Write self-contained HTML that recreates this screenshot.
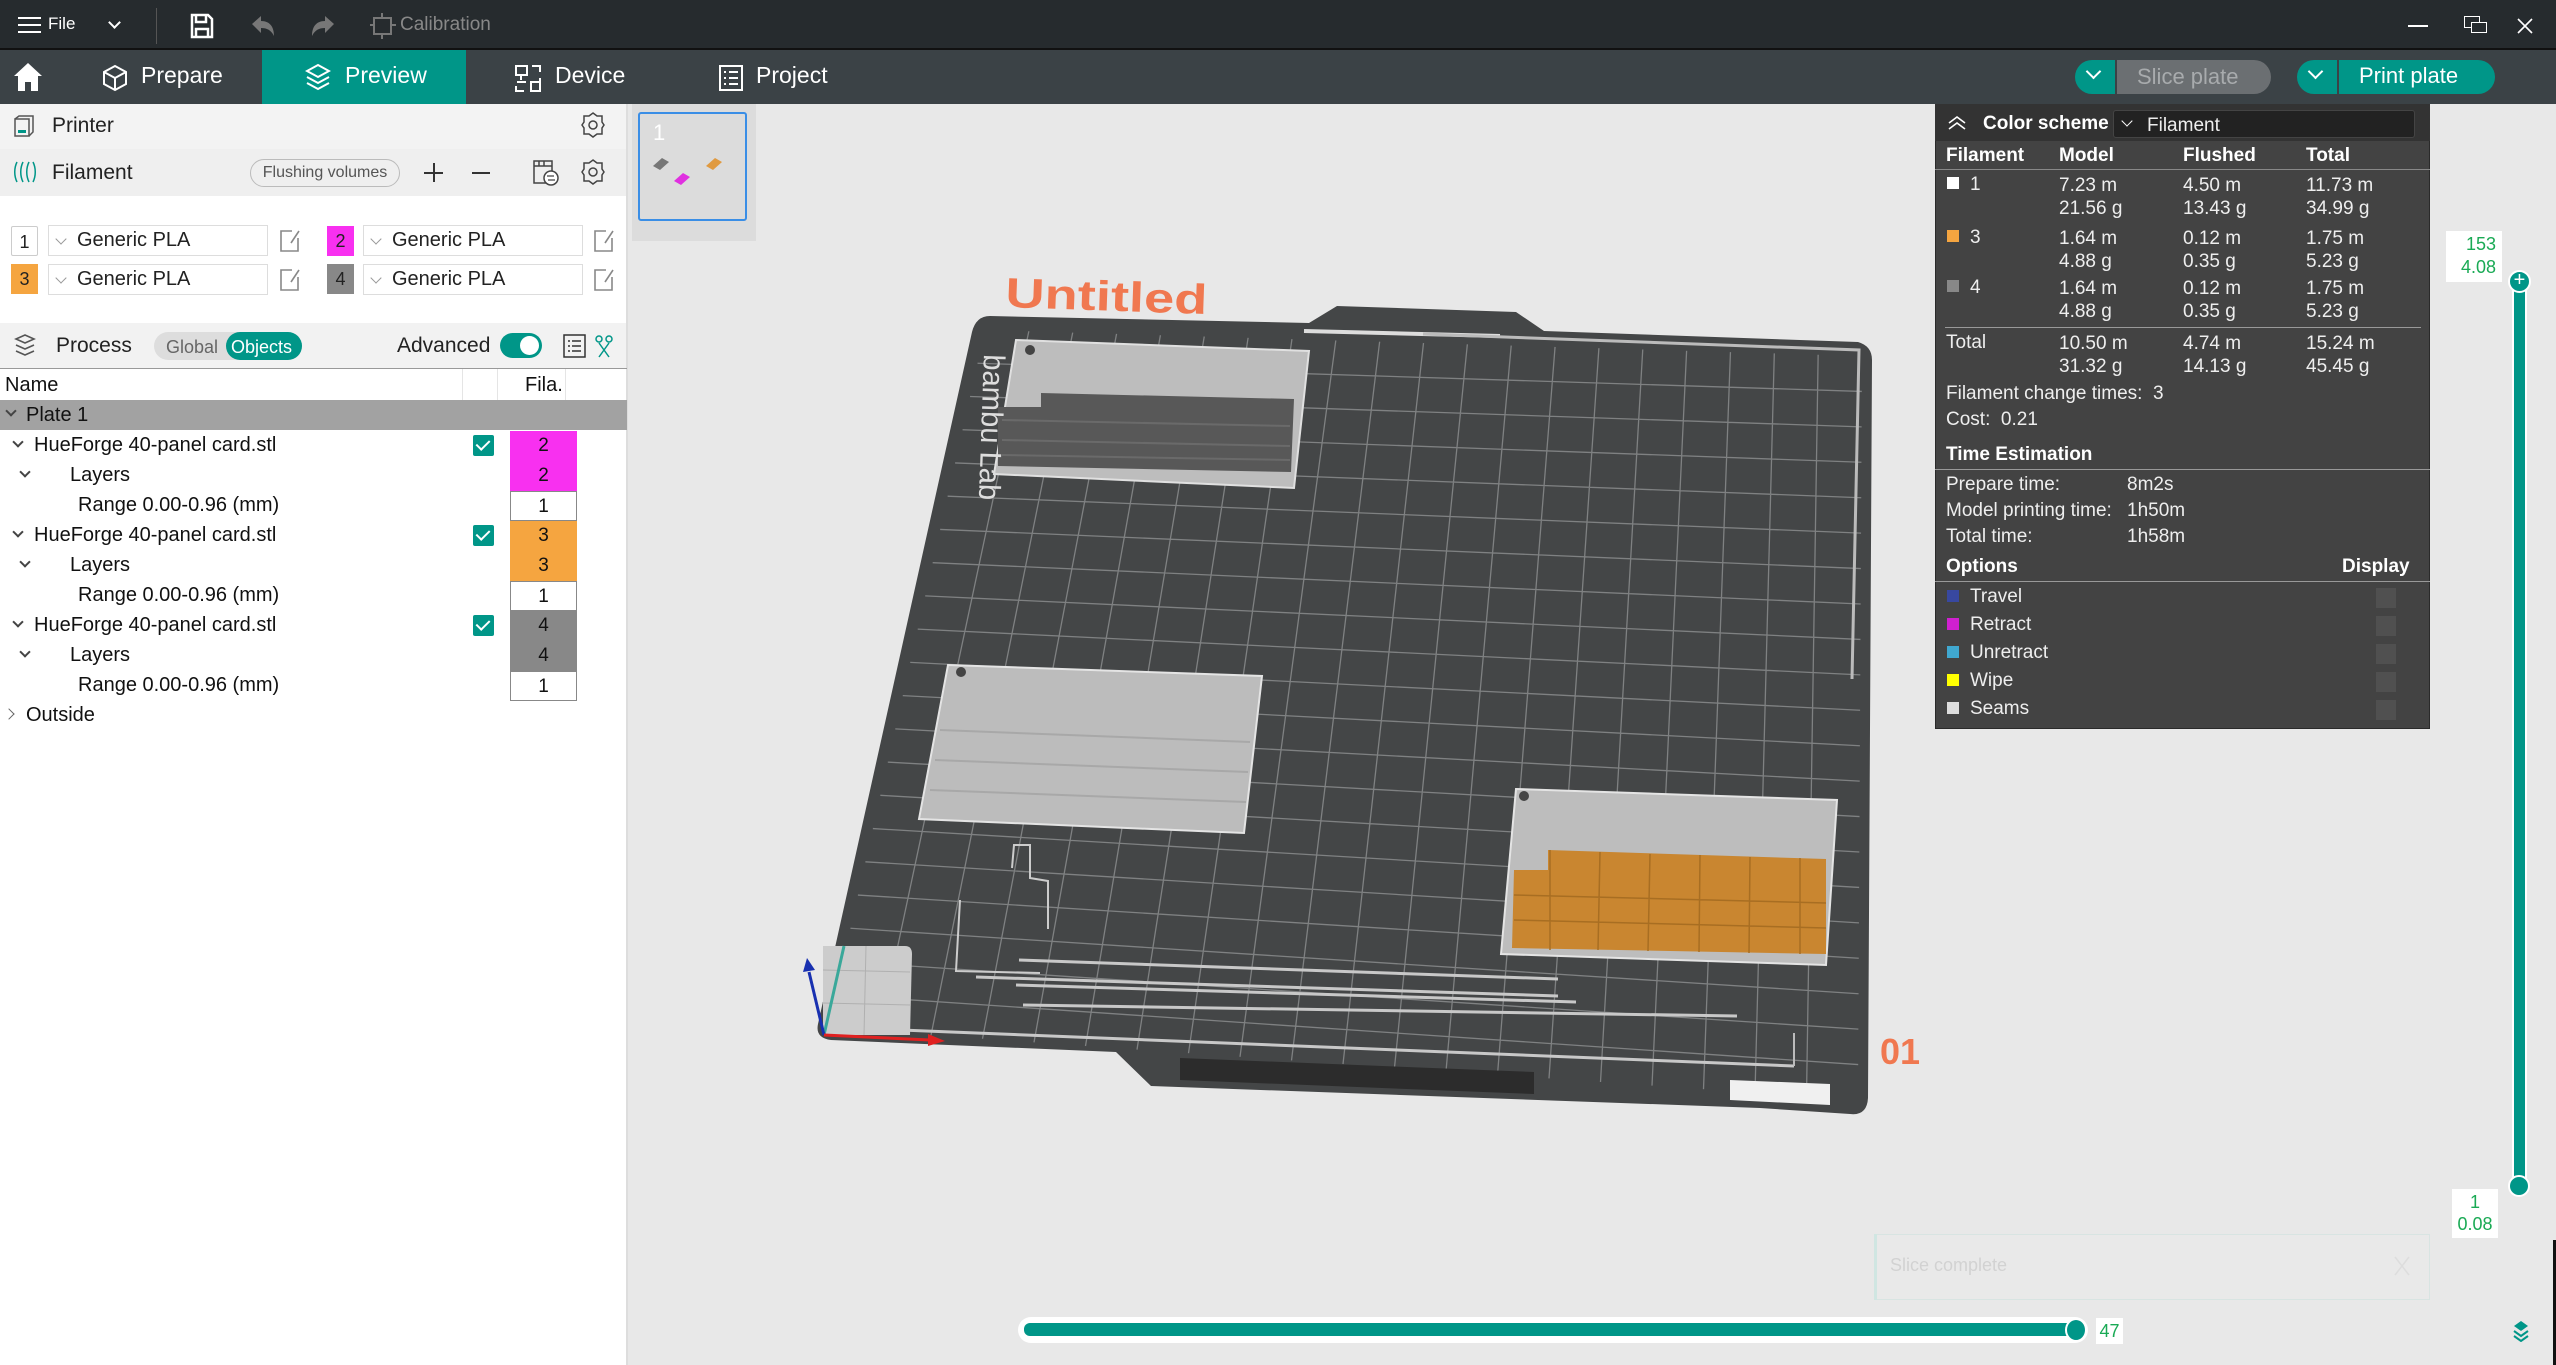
<!DOCTYPE html>
<html><head><meta charset="utf-8">
<style>
*{margin:0;padding:0;box-sizing:border-box}
body{width:2556px;height:1365px;overflow:hidden;background:#e8e8e8;font-family:"Liberation Sans","DejaVu Sans",sans-serif;position:relative}
.a{position:absolute}
.t{position:absolute;white-space:nowrap}
#title{left:0;top:0;width:2556px;height:50px;background:#262b2e;border-bottom:2px solid #111}
#nav{left:0;top:50px;width:2556px;height:54px;background:#3b4246}
.nt{color:#fff;font-size:23px;top:62px}
#left{left:0;top:104px;width:628px;height:1261px;background:#fff;border-right:2px solid #ddd}
.sec{color:#222;font-size:21px}
.st{color:#eee;font-size:19px}
.sb{color:#fff;font-size:19px;font-weight:bold}
.tr{font-size:20px;color:#111}
.fb{position:absolute;left:510px;width:67px;height:30px;text-align:center;font-size:19px;line-height:30px;color:#111}
.cb{position:absolute;left:473px;width:21px;height:21px;background:#009688;border-radius:2px}
.cb:after{content:"";position:absolute;left:6px;top:2px;width:6px;height:11px;border:solid #fff;border-width:0 2px 2px 0;transform:rotate(45deg)}
.combo{position:absolute;height:31px;border:1px solid #ddd;font-size:20px;color:#222;line-height:29px;padding-left:28px}
.combo:before{content:"";position:absolute;left:8px;top:9px;width:7px;height:7px;border:solid #999;border-width:0 1px 1px 0;transform:rotate(45deg)}
.num{position:absolute;width:27px;height:30px;font-size:18px;text-align:center;line-height:30px;color:#222}
.chev{position:absolute;width:10px;height:10px;border:solid #444;border-width:0 2px 2px 0;transform:rotate(45deg)}
</style></head><body>
<div id="title" class="a"></div>
<div class="a" style="left:18px;top:17px;width:23px;height:2px;background:#fff;box-shadow:0 7px 0 #fff,0 14px 0 #fff"></div>
<div class="t" style="left:48px;top:14px;color:#fff;font-size:17px">File</div>
<div class="a" style="left:110px;top:18px;width:9px;height:9px;border:solid #fff;border-width:0 2px 2px 0;transform:rotate(45deg)"></div>
<div class="a" style="left:156px;top:8px;width:1px;height:36px;background:#555"></div>
<svg class="a" style="left:190px;top:13px" width="24" height="26" viewBox="0 0 24 26"><path d="M2 2h16l4 4v18H2z M6 2v7h10V2 M6 24v-8h12v8" fill="none" stroke="#fff" stroke-width="2.5"/></svg>
<svg class="a" style="left:250px;top:15px" width="26" height="22"><path d="M2 9l9-8v5c9 0 13 6 13 15c-3-6-7-8-13-8v5z" fill="#777"/></svg>
<svg class="a" style="left:310px;top:15px" width="26" height="22"><path d="M24 9l-9-8v5c-9 0-13 6-13 15c3-6 7-8 13-8v5z" fill="#777"/></svg>
<svg class="a" style="left:370px;top:13px" width="26" height="26"><rect x="4" y="5" width="17" height="16" fill="none" stroke="#777" stroke-width="2"/><path d="M12 0v26M0 12h26" stroke="#777" stroke-width="2" stroke-dasharray="5 16"/></svg>
<div class="t" style="left:400px;top:14px;color:#888;font-size:19px">Calibration</div>
<div class="a" style="left:2408px;top:25px;width:20px;height:1.5px;background:#fff"></div>
<div class="a" style="left:2464px;top:16px;width:16px;height:12px;border:1.5px solid #fff"></div>
<div class="a" style="left:2471px;top:22px;width:16px;height:11px;border:1.5px solid #fff;background:#262b2e"></div>
<svg class="a" style="left:2516px;top:17px" width="18" height="18"><path d="M2 2l14 14M16 2L2 16" stroke="#fff" stroke-width="1.6"/></svg>

<div id="nav" class="a"></div>
<div class="a" style="left:262px;top:50px;width:204px;height:54px;background:#009688"></div>
<svg class="a" style="left:13px;top:62px" width="30" height="30"><path d="M15 1L1 14h4v15h7v-9h6v9h7V14h4z" fill="#fff"/></svg>
<svg class="a" style="left:102px;top:64px" width="26" height="28"><path d="M13 2l11 6v12l-11 6-11-6V8z M2 8l11 6 11-6 M13 14v12" fill="none" stroke="#fff" stroke-width="2"/></svg>
<div class="t nt" style="left:141px">Prepare</div>
<svg class="a" style="left:305px;top:63px" width="26" height="30"><path d="M13 2l11 6-11 6-11-6z M2 14l11 6 11-6 M2 20l11 6 11-6" fill="none" stroke="#fff" stroke-width="2"/></svg>
<div class="t nt" style="left:345px">Preview</div>
<svg class="a" style="left:514px;top:64px" width="30" height="28"><rect x="2" y="2" width="11" height="9" fill="none" stroke="#fff" stroke-width="2"/><path d="M7 11v5M3 18h9M18 2h8v6M2 22v5h8M26 14v13h-9V18h9" fill="none" stroke="#fff" stroke-width="2"/></svg>
<div class="t nt" style="left:555px">Device</div>
<svg class="a" style="left:718px;top:64px" width="26" height="28"><rect x="2" y="2" width="22" height="24" fill="none" stroke="#fff" stroke-width="2"/><path d="M6 8h2M11 8h9M6 14h2M11 14h9M6 20h2M11 20h9" stroke="#fff" stroke-width="2"/></svg>
<div class="t nt" style="left:756px">Project</div>
<div class="a" style="left:2075px;top:60px;width:40px;height:34px;background:#009688;border-radius:17px 0 0 17px"></div>
<div class="a" style="left:2088px;top:66px;width:11px;height:11px;border:solid #fff;border-width:0 2.5px 2.5px 0;transform:rotate(45deg)"></div>
<div class="a" style="left:2117px;top:60px;width:154px;height:34px;background:#6b6f72;border-radius:0 17px 17px 0"></div>
<div class="t" style="left:2137px;top:64px;color:#a8abad;font-size:22px">Slice plate</div>
<div class="a" style="left:2297px;top:60px;width:40px;height:34px;background:#009688;border-radius:17px 0 0 17px"></div>
<div class="a" style="left:2310px;top:66px;width:11px;height:11px;border:solid #fff;border-width:0 2.5px 2.5px 0;transform:rotate(45deg)"></div>
<div class="a" style="left:2339px;top:60px;width:156px;height:34px;background:#009688;border-radius:0 17px 17px 0"></div>
<div class="t" style="left:2359px;top:63px;color:#fff;font-size:22px">Print plate</div>

<div id="left" class="a">
 <div class="a" style="left:0;top:0;width:626px;height:45px;background:#f3f3f3"></div>
 <div class="a" style="left:0;top:45px;width:626px;height:47px;background:#efefef"></div>
 <div class="a" style="left:0;top:219px;width:626px;height:46px;background:#f2f2f2"></div>
</div>
<svg class="a" style="left:13px;top:114px" width="22" height="24"><rect x="2" y="5" width="14" height="17" fill="none" stroke="#555" stroke-width="1.5"/><path d="M2 5l4-3h14v16l-4 4" fill="none" stroke="#555" stroke-width="1.5"/><rect x="5" y="16" width="8" height="3" fill="#009688"/></svg>
<div class="t sec" style="left:52px;top:114px">Printer</div>
<svg class="a" style="left:581px;top:112px" width="24" height="26"><path d="M12 1l4 3h5v6l2 3-2 3v6h-5l-4 3-4-3H3v-6l-2-3 2-3V4h5z" fill="none" stroke="#444" stroke-width="1.5"/><circle cx="12" cy="13" r="4" fill="none" stroke="#444" stroke-width="1.5"/></svg>
<svg class="a" style="left:13px;top:160px" width="24" height="24"><path d="M4 2c-3 6-3 14 0 20M10 2c-3 6-3 14 0 20M16 2c-3 6-3 14 0 20M20 2c3 6 3 14 0 20" fill="none" stroke="#009688" stroke-width="1.5"/></svg>
<div class="t sec" style="left:52px;top:161px">Filament</div>
<div class="a" style="left:250px;top:159px;width:150px;height:28px;border:1px solid #bbb;border-radius:14px;background:#efefef;font-size:16px;color:#555;text-align:center;line-height:26px">Flushing volumes</div>
<div class="a" style="left:424px;top:172px;width:19px;height:2px;background:#333"></div>
<div class="a" style="left:432.5px;top:163px;width:2px;height:19px;background:#333"></div>
<div class="a" style="left:472px;top:172px;width:18px;height:2px;background:#333"></div>
<svg class="a" style="left:532px;top:159px" width="28" height="28"><rect x="2" y="2" width="18" height="22" fill="none" stroke="#444" stroke-width="1.5"/><path d="M2 7h18M7 2v5M12 2v5" stroke="#444" stroke-width="1.5"/><circle cx="19" cy="19" r="7" fill="#fff" stroke="#444" stroke-width="1.5"/><path d="M15 17h7M16 21h7" stroke="#444" stroke-width="1.3"/></svg>
<svg class="a" style="left:581px;top:159px" width="24" height="26"><path d="M12 1l4 3h5v6l2 3-2 3v6h-5l-4 3-4-3H3v-6l-2-3 2-3V4h5z" fill="none" stroke="#444" stroke-width="1.5"/><circle cx="12" cy="13" r="4" fill="none" stroke="#444" stroke-width="1.5"/></svg>

<div class="num" style="left:11px;top:226px;border:1px solid #ccc;border-radius:2px">1</div>
<div class="combo" style="left:48px;top:225px;width:220px">Generic PLA</div>
<div class="num" style="left:327px;top:226px;background:#f830f0">2</div>
<div class="combo" style="left:363px;top:225px;width:220px">Generic PLA</div>
<div class="num" style="left:11px;top:264px;background:#f5a540">3</div>
<div class="combo" style="left:48px;top:264px;width:220px">Generic PLA</div>
<div class="num" style="left:327px;top:264px;background:#888">4</div>
<div class="combo" style="left:363px;top:264px;width:220px">Generic PLA</div>
<svg class="a" style="left:278px;top:228px" width="24" height="26"><path d="M14 3H3v20h17V10 M13 15l8-12" fill="none" stroke="#888" stroke-width="1.6"/></svg>
<svg class="a" style="left:592px;top:228px" width="24" height="26"><path d="M14 3H3v20h17V10 M13 15l8-12" fill="none" stroke="#888" stroke-width="1.6"/></svg>
<svg class="a" style="left:278px;top:267px" width="24" height="26"><path d="M14 3H3v20h17V10 M13 15l8-12" fill="none" stroke="#888" stroke-width="1.6"/></svg>
<svg class="a" style="left:592px;top:267px" width="24" height="26"><path d="M14 3H3v20h17V10 M13 15l8-12" fill="none" stroke="#888" stroke-width="1.6"/></svg>

<svg class="a" style="left:13px;top:333px" width="24" height="26"><path d="M3 6l9-4 9 4-9 4z M3 12l9 4 9-4 M3 18l9 4 9-4" fill="none" stroke="#555" stroke-width="1.6"/></svg>
<div class="t sec" style="left:56px;top:334px">Process</div>
<div class="a" style="left:154px;top:332px;width:148px;height:28px;background:#ddd;border-radius:14px"></div>
<div class="t" style="left:166px;top:337px;font-size:18px;color:#666">Global</div>
<div class="a" style="left:226px;top:332px;width:76px;height:28px;background:#009688;border-radius:14px"></div>
<div class="t" style="left:231px;top:337px;font-size:18px;color:#fff">Objects</div>
<div class="t" style="left:397px;top:334px;font-size:21px;color:#222">Advanced</div>
<div class="a" style="left:500px;top:333px;width:42px;height:25px;background:#009688;border-radius:13px"></div>
<div class="a" style="left:520px;top:336px;width:19px;height:19px;background:#fff;border-radius:50%"></div>
<svg class="a" style="left:562px;top:333px" width="26" height="26"><rect x="2" y="2" width="21" height="22" fill="none" stroke="#333" stroke-width="1.5"/><path d="M6 8h2M10 8h9M6 13h2M10 13h9M6 18h2M10 18h9" stroke="#333" stroke-width="1.5"/></svg>
<svg class="a" style="left:593px;top:333px" width="22" height="26"><circle cx="6" cy="6" r="3" fill="none" stroke="#009688" stroke-width="1.5"/><circle cx="16" cy="6" r="3" fill="none" stroke="#009688" stroke-width="1.5"/><path d="M6 10l10 14M16 10L6 24" stroke="#009688" stroke-width="1.5"/></svg>

<div class="a" style="left:0;top:368px;width:627px;height:1px;background:#999"></div>
<div class="a" style="left:462px;top:369px;width:1px;height:31px;background:#e5e5e5"></div>
<div class="a" style="left:497px;top:369px;width:1px;height:31px;background:#e5e5e5"></div>
<div class="a" style="left:565px;top:369px;width:1px;height:31px;background:#e5e5e5"></div>
<div class="t tr" style="left:5px;top:374px">Name</div>
<div class="t tr" style="left:525px;top:374px">Fila.</div>
<div class="a" style="left:0;top:400px;width:627px;height:30px;background:#a2a2a2"></div>
<div class="chev" style="left:7px;top:407px;width:8px;height:8px"></div>
<div class="t tr" style="left:26px;top:404px">Plate 1</div>

<div class="fb" style="top:431px;background:#f830f0">2</div>
<div class="fb" style="top:461px;background:#f830f0">2</div>
<div class="fb" style="top:491px;border:1px solid #888;background:#fff">1</div>
<div class="fb" style="top:521px;background:#f5a540">3</div>
<div class="fb" style="top:551px;background:#f5a540">3</div>
<div class="fb" style="top:581px;border:1px solid #888;background:#fff">1</div>
<div class="fb" style="top:611px;background:#888">4</div>
<div class="fb" style="top:641px;background:#888">4</div>
<div class="fb" style="top:671px;border:1px solid #888;background:#fff">1</div>

<div class="chev" style="left:14px;top:438px;width:8px;height:8px"></div>
<div class="t tr" style="left:34px;top:434px">HueForge 40-panel card.stl</div><div class="cb" style="top:435px"></div>
<div class="chev" style="left:21px;top:468px;width:8px;height:8px"></div>
<div class="t tr" style="left:70px;top:464px">Layers</div>
<div class="t tr" style="left:78px;top:494px">Range 0.00-0.96 (mm)</div>
<div class="chev" style="left:14px;top:528px;width:8px;height:8px"></div>
<div class="t tr" style="left:34px;top:524px">HueForge 40-panel card.stl</div><div class="cb" style="top:525px"></div>
<div class="chev" style="left:21px;top:558px;width:8px;height:8px"></div>
<div class="t tr" style="left:70px;top:554px">Layers</div>
<div class="t tr" style="left:78px;top:584px">Range 0.00-0.96 (mm)</div>
<div class="chev" style="left:14px;top:618px;width:8px;height:8px"></div>
<div class="t tr" style="left:34px;top:614px">HueForge 40-panel card.stl</div><div class="cb" style="top:615px"></div>
<div class="chev" style="left:21px;top:648px;width:8px;height:8px"></div>
<div class="t tr" style="left:70px;top:644px">Layers</div>
<div class="t tr" style="left:78px;top:674px">Range 0.00-0.96 (mm)</div>
<div class="a" style="left:5px;top:710px;width:8px;height:8px;border:solid #666;border-width:1.5px 1.5px 0 0;transform:rotate(45deg)"></div>
<div class="t tr" style="left:26px;top:704px">Outside</div>

<!-- thumbnail -->
<div class="a" style="left:632px;top:104px;width:124px;height:137px;background:#dcdcdc"></div>
<div class="a" style="left:638px;top:112px;width:109px;height:109px;border:2px solid #3a8ee6;border-radius:3px;background:#dcdcdc"></div>
<div class="t" style="left:653px;top:120px;color:#fff;font-size:22px">1</div>
<svg class="a" style="left:640px;top:145px" width="100" height="50"><path d="M13 21l9-8 7 4-9 8z" fill="#777"/><path d="M34 36l9-8 7 4-9 8z" fill="#e030e0"/><path d="M66 21l9-8 7 4-9 8z" fill="#e09a40"/></svg>

<!-- plate -->
<svg class="a" style="left:0;top:0" width="2556" height="1365">
 <path d="M990 316 L1309 323 L1337 306 L1516 312 L1544 331 L1858 342 Q1872 346 1872 360 L1868 1098 Q1867 1116 1850 1114 L1760 1108 L1151 1086 L1116 1052 L831 1040 Q815 1038 818 1024 L972 332 Q976 316 990 316Z" fill="#444647"/>
 <g id="grid" stroke="#7f8182" stroke-width="1.3" fill="none"></g>
 <text x="1005" y="307" font-family="Liberation Sans,sans-serif" font-weight="bold" font-size="42" fill="#f07850" textLength="202" lengthAdjust="spacingAndGlyphs" transform="rotate(2 1005 307)">Untitled</text>
 <text x="1880" y="1064" font-family="Liberation Sans,sans-serif" font-weight="bold" font-size="36" fill="#f07850">01</text>
 <path d="M1016 340 L1309 351 L1294 488 L994 474Z" fill="#bdbdbd" stroke="#e0e0e0" stroke-width="2"/>
 <path d="M998 407 L1041 407 L1041 393 L1294 399 L1291 472 L998 466Z" fill="#585858"/>
 <path d="M1002 420 L1290 426 M1002 440 L1290 446 M1002 455 L1290 460" stroke="#6a6a6a" stroke-width="2"/>
 <circle cx="1030" cy="350" r="5" fill="#444"/>
 <path d="M948 665 L1262 676 L1244 833 L919 819Z" fill="#bcbcbc" stroke="#e4e4e4" stroke-width="2"/>
 <path d="M940 730 L1250 742 M935 760 L1248 772 M930 790 L1246 802" stroke="#a8a8a8" stroke-width="2"/>
 <circle cx="961" cy="672" r="5" fill="#444"/>
 <path d="M1516 789 L1837 800 L1826 965 L1501 954Z" fill="#bdbdbd" stroke="#e4e4e4" stroke-width="2"/>
 <path d="M1548 850 L1826 859 L1826 954 L1512 948 L1514 870 L1548 870Z" fill="#c98630"/>
 <path d="M1514 895 L1826 903 M1514 920 L1826 928 M1550 850 L1550 950 M1600 852 L1598 950 M1650 854 L1648 951 M1700 855 L1699 952 M1750 857 L1749 953 M1800 858 L1800 954" stroke="#a86e22" stroke-width="1.5"/>
 <circle cx="1524" cy="796" r="5" fill="#444"/>
 <path d="M1304 331 L1500 336" stroke="#ddd" stroke-width="4"/>
 <path d="M1423 334 L1859 350 L1852 679" stroke="#bbb" stroke-width="3" fill="none"/>
 <path d="M1019 960 L1558 979 M976 977 L1558 996 M1016 985 L1576 1002 M1023 1005 L1737 1016 M901 1030 L1794 1066" stroke="#c8c8c8" stroke-width="3"/>
 <path d="M1012 868 L1014 845 L1030 845 L1030 878 L1048 881 L1048 929 M960 900 L956 971 L1040 973" stroke="#ccc" stroke-width="2" fill="none"/>
 <path d="M1180 1058 L1534 1072 L1534 1094 L1180 1080Z" fill="#2c2c2c"/>
 <path d="M1730 1080 L1830 1084 L1830 1105 L1730 1100Z" fill="#f0f0f0"/>
 <path d="M1794 1033 L1794 1066" stroke="#bbb" stroke-width="2"/>
 <path d="M823 946 L905 946 Q912 946 912 954 L910 1035 L823 1035Z" fill="#ccc"/>
 <path d="M823 970 L910 972 M822 1003 L910 1005 M866 946 L864 1035" stroke="#b0b0b0" stroke-width="1"/>
 <path d="M824 1035 L844 946" stroke="#3aa89a" stroke-width="3"/>
 <path d="M824 1035 L809 972" stroke="#1830b0" stroke-width="3"/><path d="M803 972 L815 970 L807 958Z" fill="#1830b0"/>
 <path d="M824 1035 L930 1040" stroke="#e02020" stroke-width="3"/><path d="M928 1034 L945 1041 L928 1046Z" fill="#e02020"/>
 <text x="0" y="0" font-family="Liberation Sans,sans-serif" font-size="30" fill="#ddd" textLength="146" lengthAdjust="spacingAndGlyphs" transform="translate(984 354) rotate(92)">bambu Lab</text>
</svg>
<script>
(function(){var g=document.getElementById('grid');
var A=[985,330],B=[1862,356],C=[1858,1100],D=[828,1028];
function L(p,q,t){return[p[0]+(q[0]-p[0])*t,p[1]+(q[1]-p[1])*t]}
var s='';var N=20,M=21;
for(var i=1;i<N;i++){var t=i/N,p=L(A,B,t),q=L(D,C,t);s+='M'+p[0]+' '+p[1]+'L'+q[0]+' '+q[1];}
for(var j=1;j<M;j++){var t=j/M,p=L(A,D,t),q=L(B,C,t);s+='M'+p[0]+' '+p[1]+'L'+q[0]+' '+q[1];}
var e=document.createElementNS('http://www.w3.org/2000/svg','path');e.setAttribute('d',s);g.appendChild(e);})();
</script>

<!-- stats panel -->
<div class="a" style="left:1935px;top:104px;width:495px;height:625px;background:#434343;border:1px solid #2a2a2a"></div>
<div class="a" style="left:1935px;top:104px;width:495px;height:37px;background:#333"></div>
<div class="a" style="left:2113px;top:110px;width:302px;height:28px;background:#222;border:1px solid #444;border-radius:3px"></div>
<svg class="a" style="left:1947px;top:114px" width="20" height="16"><path d="M2 9l8-6 8 6M2 15l8-6 8 6" fill="none" stroke="#fff" stroke-width="1.6"/></svg>
<div class="t sb" style="left:1983px;top:113px">Color scheme</div>
<div class="a" style="left:2123px;top:117px;width:8px;height:8px;border:solid #fff;border-width:0 1px 1px 0;transform:rotate(45deg)"></div>
<div class="t st" style="left:2147px;top:115px">Filament</div>
<div class="t sb" style="left:1946px;top:145px">Filament</div>
<div class="t sb" style="left:2059px;top:145px">Model</div>
<div class="t sb" style="left:2183px;top:145px">Flushed</div>
<div class="t sb" style="left:2306px;top:145px">Total</div>
<div class="a" style="left:1935px;top:169px;width:495px;height:1px;background:#888"></div>
<div class="a" style="left:1947px;top:177px;width:12px;height:12px;background:#fff"></div>
<div class="a" style="left:1947px;top:230px;width:12px;height:12px;background:#f5a540"></div>
<div class="a" style="left:1947px;top:280px;width:12px;height:12px;background:#888"></div>
<div class="t st" style="left:1970px;top:174px">1</div>
<div class="t st" style="left:1970px;top:227px">3</div>
<div class="t st" style="left:1970px;top:277px">4</div>
<div class="t st" style="left:2059px;top:174px;line-height:23px">7.23 m<br>21.56 g</div>
<div class="t st" style="left:2183px;top:174px;line-height:23px">4.50 m<br>13.43 g</div>
<div class="t st" style="left:2306px;top:174px;line-height:23px">11.73 m<br>34.99 g</div>
<div class="t st" style="left:2059px;top:227px;line-height:23px">1.64 m<br>4.88 g</div>
<div class="t st" style="left:2183px;top:227px;line-height:23px">0.12 m<br>0.35 g</div>
<div class="t st" style="left:2306px;top:227px;line-height:23px">1.75 m<br>5.23 g</div>
<div class="t st" style="left:2059px;top:277px;line-height:23px">1.64 m<br>4.88 g</div>
<div class="t st" style="left:2183px;top:277px;line-height:23px">0.12 m<br>0.35 g</div>
<div class="t st" style="left:2306px;top:277px;line-height:23px">1.75 m<br>5.23 g</div>
<div class="a" style="left:1945px;top:327px;width:476px;height:1px;background:#999"></div>
<div class="t st" style="left:1946px;top:332px">Total</div>
<div class="t st" style="left:2059px;top:332px;line-height:23px">10.50 m<br>31.32 g</div>
<div class="t st" style="left:2183px;top:332px;line-height:23px">4.74 m<br>14.13 g</div>
<div class="t st" style="left:2306px;top:332px;line-height:23px">15.24 m<br>45.45 g</div>
<div class="t st" style="left:1946px;top:383px">Filament change times:&nbsp; 3</div>
<div class="t st" style="left:1946px;top:409px">Cost:&nbsp; 0.21</div>
<div class="t sb" style="left:1946px;top:444px">Time Estimation</div>
<div class="a" style="left:1935px;top:469px;width:495px;height:1px;background:#999"></div>
<div class="t st" style="left:1946px;top:474px">Prepare time:</div><div class="t st" style="left:2127px;top:474px">8m2s</div>
<div class="t st" style="left:1946px;top:500px">Model printing time:</div><div class="t st" style="left:2127px;top:500px">1h50m</div>
<div class="t st" style="left:1946px;top:526px">Total time:</div><div class="t st" style="left:2127px;top:526px">1h58m</div>
<div class="t sb" style="left:1946px;top:556px">Options</div>
<div class="t sb" style="left:2342px;top:556px">Display</div>
<div class="a" style="left:1935px;top:581px;width:495px;height:1px;background:#999"></div>
<div class="a" style="left:1947px;top:590px;width:12px;height:12px;background:#3848a0"></div><div class="t st" style="left:1970px;top:586px">Travel</div>
<div class="a" style="left:1947px;top:618px;width:12px;height:12px;background:#d020d0"></div><div class="t st" style="left:1970px;top:614px">Retract</div>
<div class="a" style="left:1947px;top:646px;width:12px;height:12px;background:#40a8d0"></div><div class="t st" style="left:1970px;top:642px">Unretract</div>
<div class="a" style="left:1947px;top:674px;width:12px;height:12px;background:#ffff00"></div><div class="t st" style="left:1970px;top:670px">Wipe</div>
<div class="a" style="left:1947px;top:702px;width:12px;height:12px;background:#ddd"></div><div class="t st" style="left:1970px;top:698px">Seams</div>
<div class="a" style="left:2376px;top:588px;width:20px;height:20px;background:#505050"></div>
<div class="a" style="left:2376px;top:616px;width:20px;height:20px;background:#505050"></div>
<div class="a" style="left:2376px;top:644px;width:20px;height:20px;background:#505050"></div>
<div class="a" style="left:2376px;top:672px;width:20px;height:20px;background:#505050"></div>
<div class="a" style="left:2376px;top:700px;width:20px;height:20px;background:#505050"></div>

<!-- vertical slider -->
<div class="a" style="left:2512px;top:280px;width:15px;height:910px;background:#009688;border:2px solid #fff"></div>
<div class="a" style="left:2508px;top:270px;width:23px;height:23px;background:#009688;border:2px solid #fff;border-radius:50%;color:#fff;font-size:20px;line-height:17px;text-align:center">+</div>
<div class="a" style="left:2508px;top:1175px;width:22px;height:22px;background:#009688;border:2px solid #fff;border-radius:50%"></div>
<div class="a" style="left:2446px;top:231px;width:56px;height:51px;background:#fff;color:#1aaa55;font-size:18px;text-align:right;padding-right:6px;line-height:23px;padding-top:2px">153<br>4.08</div>
<div class="a" style="left:2452px;top:1189px;width:46px;height:49px;background:#fff;color:#1aaa55;font-size:18px;text-align:center;line-height:22px;padding-top:2px">1<br>0.08</div>
<div class="a" style="left:1874px;top:1234px;width:556px;height:66px;border:1px solid #d8e4e2;background:#e9e9e9"></div>
<div class="a" style="left:1874px;top:1234px;width:3px;height:66px;background:#d0e6e2"></div>
<div class="t" style="left:1890px;top:1255px;color:#d2d2d2;font-size:18px">Slice complete</div>
<svg class="a" style="left:2393px;top:1255px" width="18" height="22"><path d="M2 2l14 18M16 2L2 20" stroke="#ddd" stroke-width="1.5"/></svg>
<div class="a" style="left:1018px;top:1317px;width:1070px;height:26px;background:#fff;border-radius:13px"></div>
<div class="a" style="left:1024px;top:1323px;width:1054px;height:13px;background:#009688;border-radius:6px"></div>
<div class="a" style="left:2065px;top:1318px;width:22px;height:24px;background:#009688;border:2px solid #fff;border-radius:50%"></div>
<div class="a" style="left:2096px;top:1318px;width:27px;height:26px;background:#fff;color:#1aaa55;font-size:18px;text-align:center;line-height:26px">47</div>
<svg class="a" style="left:2512px;top:1320px" width="18" height="22"><path d="M9 1l7 5-7 5-7-5z" fill="#009688"/><path d="M2 11l7 5 7-5M2 16l7 5 7-5" fill="none" stroke="#009688" stroke-width="2"/></svg>
<div class="a" style="left:2553px;top:1240px;width:3px;height:125px;background:#111"></div>
</body></html>
